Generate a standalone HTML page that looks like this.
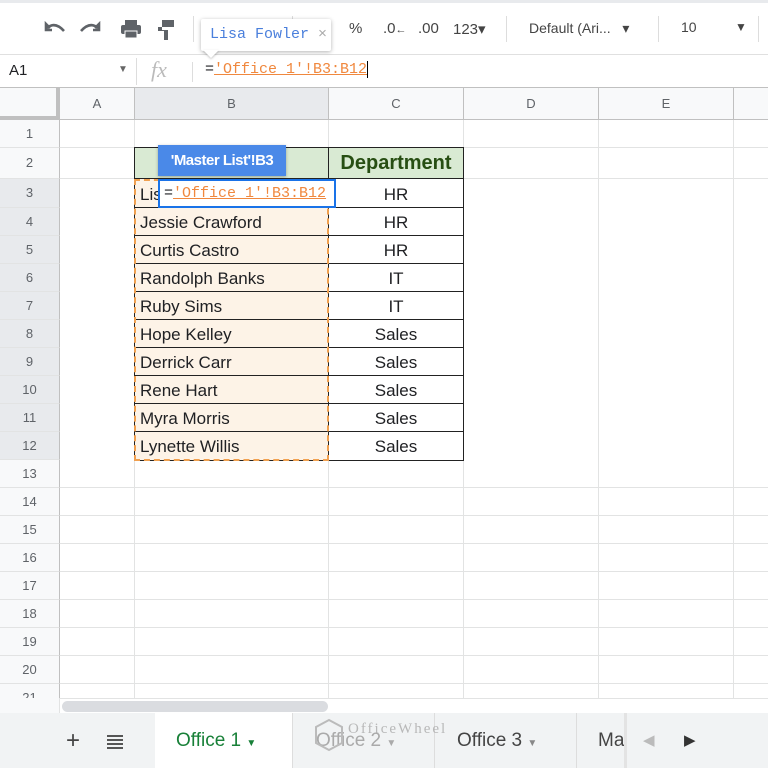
<!DOCTYPE html><html><head><style>
*{margin:0;padding:0;box-sizing:border-box}
body{width:768px;height:768px;overflow:hidden;background:#fff;font-family:"Liberation Sans",Arial,sans-serif;position:relative}
.a{position:absolute}
.rh{position:absolute;left:0;width:60px;text-align:center;font-size:13px;color:#5f6368;background:#f8f9fa;border-bottom:1px solid #e2e3e3;border-right:1px solid #c0c0c0}
.hl{position:absolute;left:60px;width:708px;height:1px;background:#e2e3e3}
.vl{position:absolute;top:120px;width:1px;height:578px;background:#e2e3e3}
.ch{position:absolute;top:88px;height:32px;text-align:center;line-height:31px;font-size:13px;color:#5f6368;background:#f8f9fa;border-right:1px solid #c0c0c0;border-bottom:1px solid #c0c0c0}
.c{position:absolute;font-size:17px;color:#202124;line-height:30px;height:28px}
.tb{position:absolute;top:16px;font-size:15px;color:#444}
</style></head><body>
<!-- toolbar -->
<div class="a" style="left:0;top:0;width:768px;height:55px;background:#fff;border-top:3px solid #e8eaed;border-bottom:1px solid #e0e0e0"></div>
<svg class="a" style="left:44px;top:18px" width="130" height="24" viewBox="0 0 130 24">
<path d="M6 10 L2 6 L2 12 L8 12 M3 10 Q11 3 20 13" stroke="#5f6368" stroke-width="2.6" fill="none"/>
<path d="M66 10 L70 6 L70 12 L64 12 M69 10 Q61 3 52 13" stroke="#5f6368" stroke-width="2.6" fill="none" transform="translate(-15 0)"/>
<rect x="81" y="2" width="12" height="5" fill="#5f6368"/><rect x="77" y="7" width="20" height="9" rx="2" fill="#5f6368"/><rect x="81" y="13" width="12" height="7" fill="#5f6368" stroke="#fff" stroke-width="1"/>
<rect x="118" y="2" width="13" height="7" fill="#5f6368"/><rect x="114" y="9" width="4" height="3" fill="#5f6368"/><rect x="114" y="12" width="6" height="1" fill="#5f6368"/><rect x="120" y="12" width="4" height="10" fill="#5f6368"/>
</svg>
<div class="a" style="left:193px;top:16px;width:1px;height:26px;background:#ddd"></div>
<div class="a" style="left:292px;top:16px;width:1px;height:26px;background:#ddd"></div>
<div class="tb" style="left:349px;top:20px">%</div>
<div class="tb" style="left:383px;top:20px">.0<span style="font-size:11px">←</span></div>
<div class="tb" style="left:418px;top:20px">.00</div>
<div class="tb" style="left:453px;top:20px">123▾</div>
<div class="a" style="left:506px;top:16px;width:1px;height:26px;background:#ddd"></div>
<div class="tb" style="left:529px;top:20px;font-size:14px">Default (Ari...&nbsp;&nbsp;&nbsp;▾</div>
<div class="a" style="left:658px;top:16px;width:1px;height:26px;background:#ddd"></div>
<div class="tb" style="left:681px;top:19px;font-size:14px">10</div>
<div class="tb" style="left:735px;top:20px;font-size:12px">▼</div>
<div class="a" style="left:758px;top:16px;width:1px;height:26px;background:#ddd"></div>
<!-- name tooltip -->
<div class="a" style="left:201px;top:19px;width:130px;height:32px;background:#fff;box-shadow:0 1px 4px rgba(0,0,0,.3);border-radius:2px;font-family:'Liberation Mono',monospace;font-size:15px;color:#4a7fdc;line-height:32px;padding-left:9px">Lisa Fowler <span style="color:#aaa">×</span></div>
<div class="a" style="left:203px;top:50px;width:0;height:0;border-left:8px solid transparent;border-right:8px solid transparent;border-top:8px solid #fff;filter:drop-shadow(0 1px 1px rgba(0,0,0,.25))"></div>
<!-- formula bar -->
<div class="a" style="left:0;top:55px;width:768px;height:33px;border-bottom:1px solid #c0c0c0"></div>
<div class="a" style="left:9px;top:62px;font-size:15px;color:#202124">A1</div>
<div class="a" style="left:118px;top:64px;font-size:10px;color:#666">▼</div>
<div class="a" style="left:136px;top:58px;width:1px;height:27px;background:#ddd"></div>
<div class="a" style="left:151px;top:57px;font-family:'Liberation Serif',serif;font-style:italic;font-size:22px;color:#bbb">fx</div>
<div class="a" style="left:192px;top:62px;width:1px;height:20px;background:#ddd"></div>
<div class="a" style="left:205px;top:61px;font-family:'Liberation Mono',monospace;font-size:15px;color:#202124">=<span style="color:#f0883e;text-decoration:underline">'Office 1'!B3:B12</span><span style="border-left:1px solid #000"></span></div>
<!-- headers -->
<div class="a" style="left:0;top:88px;width:60px;height:32px;background:#f8f9fa;border-right:4px solid #c0c0c0;border-bottom:4px solid #c0c0c0"></div>
<div class="ch" style="left:60px;width:75px">A</div>
<div class="ch" style="left:135px;width:194px;background:#e8eaed">B</div>
<div class="ch" style="left:329px;width:135px">C</div>
<div class="ch" style="left:464px;width:135px">D</div>
<div class="ch" style="left:599px;width:135px">E</div>
<div class="ch" style="left:734px;width:40px"></div>
<!-- grid -->
<div class="vl" style="left:134px"></div><div class="vl" style="left:328px"></div><div class="vl" style="left:463px"></div><div class="vl" style="left:598px"></div><div class="vl" style="left:733px"></div>
<div class="rh" style="top:120px;height:28px;line-height:27px">1</div>
<div class="rh" style="top:148px;height:31px;line-height:30px">2</div>
<div class="rh" style="top:179px;height:29px;line-height:28px;background:#e8eaed">3</div>
<div class="rh" style="top:208px;height:28px;line-height:27px;background:#e8eaed">4</div>
<div class="rh" style="top:236px;height:28px;line-height:27px;background:#e8eaed">5</div>
<div class="rh" style="top:264px;height:28px;line-height:27px;background:#e8eaed">6</div>
<div class="rh" style="top:292px;height:28px;line-height:27px;background:#e8eaed">7</div>
<div class="rh" style="top:320px;height:28px;line-height:27px;background:#e8eaed">8</div>
<div class="rh" style="top:348px;height:28px;line-height:27px;background:#e8eaed">9</div>
<div class="rh" style="top:376px;height:28px;line-height:27px;background:#e8eaed">10</div>
<div class="rh" style="top:404px;height:28px;line-height:27px;background:#e8eaed">11</div>
<div class="rh" style="top:432px;height:28px;line-height:27px;background:#e8eaed">12</div>
<div class="rh" style="top:460px;height:28px;line-height:27px">13</div>
<div class="rh" style="top:488px;height:28px;line-height:27px">14</div>
<div class="rh" style="top:516px;height:28px;line-height:27px">15</div>
<div class="rh" style="top:544px;height:28px;line-height:27px">16</div>
<div class="rh" style="top:572px;height:28px;line-height:27px">17</div>
<div class="rh" style="top:600px;height:28px;line-height:27px">18</div>
<div class="rh" style="top:628px;height:28px;line-height:27px">19</div>
<div class="rh" style="top:656px;height:28px;line-height:27px">20</div>
<div class="rh" style="top:684px;height:28px;line-height:27px">21</div>
<div class="hl" style="top:147px"></div><div class="hl" style="top:178px"></div>
<div class="hl" style="top:487px"></div><div class="hl" style="top:515px"></div><div class="hl" style="top:543px"></div><div class="hl" style="top:571px"></div><div class="hl" style="top:599px"></div><div class="hl" style="top:627px"></div><div class="hl" style="top:655px"></div><div class="hl" style="top:683px"></div>
<!-- table -->
<div class="a" style="left:134px;top:147px;width:330px;height:314px;border:1px solid #222;background:#fff"></div>
<div class="a" style="left:135px;top:148px;width:328px;height:31px;background:#d9ead3;border-bottom:1px solid #222"></div>
<div class="a" style="left:328px;top:148px;width:1px;height:312px;background:#222"></div>
<div class="a" style="left:329px;top:152px;width:134px;text-align:center;font-size:20px;font-weight:bold;color:#274e13">Department</div>
<div class="a" style="left:135px;top:179px;width:193px;height:281px;background:#fdf3e7"></div>
<div id="rows"></div>
<div class="a" style="left:134px;top:179px;width:195px;height:282px;border:2px dashed #f0a050"></div>
<!-- edit box -->
<div class="a" style="left:158px;top:179px;width:178px;height:29px;border:2px solid #1a73e8;background:#fff;font-family:'Liberation Mono',monospace;font-size:15px;line-height:25px;padding-left:4px;color:#202124">=<span style="color:#f0883e;text-decoration:underline">'Office 1'!B3:B12</span></div>
<div class="a" style="left:158px;top:145px;width:128px;height:31px;background:#4a89e8;color:#fff;font-size:15px;font-weight:bold;line-height:31px;text-align:center;box-shadow:0 1px 3px rgba(0,0,0,.3);letter-spacing:-.5px">'Master List'!B3</div>
<!-- scrollbar -->
<div class="a" style="left:0;top:698px;width:768px;height:15px;background:#fff;border-top:1px solid #e2e3e3"></div>
<div class="a" style="left:0;top:698px;width:60px;height:15px;background:#f8f9fa;border-right:1px solid #e2e3e3"></div>
<div class="a" style="left:62px;top:701px;width:266px;height:11px;background:#dadce0;border-radius:6px"></div>
<!-- tabs -->
<div class="a" style="left:0;top:713px;width:768px;height:55px;background:#f1f3f4"></div>
<div class="a" style="left:66px;top:727px;font-size:24px;color:#444">+</div>
<div class="a" style="left:107px;top:735px;width:16px;height:14px;background:repeating-linear-gradient(#555 0 2px,transparent 2px 4px)"></div>
<div class="a" style="left:155px;top:713px;width:138px;height:55px;background:#fff;border-right:1px solid #ddd"></div>
<div class="a" style="left:176px;top:730px;font-size:19px;color:#188038">Office 1 <span style="font-size:10px">▼</span></div>
<div class="a" style="left:316px;top:730px;font-size:19px;color:#aaa">Office 2 <span style="font-size:10px">▼</span></div>
<div class="a" style="left:434px;top:713px;width:1px;height:55px;background:#ddd"></div>
<div class="a" style="left:457px;top:730px;font-size:19px;color:#444">Office 3 <span style="font-size:10px;color:#888">▼</span></div>
<div class="a" style="left:576px;top:713px;width:1px;height:55px;background:#ddd"></div>
<div class="a" style="left:598px;top:730px;font-size:19px;color:#444">Ma</div>
<div class="a" style="left:624px;top:713px;width:144px;height:55px;background:#f1f3f4;border-left:3px solid #e3e3e3"></div>
<div class="a" style="left:643px;top:731px;font-size:15px;color:#bbb">◀</div>
<div class="a" style="left:684px;top:731px;font-size:15px;color:#333">▶</div>
<div class="a" style="left:348px;top:721px;font-family:'Liberation Serif',serif;font-size:15px;letter-spacing:2px;color:#aaa;opacity:.8">OfficeWheel</div>
<svg class="a" style="left:314px;top:718px" width="30" height="34"><path d="M15 2 L28 9 L28 25 L15 32 L2 25 L2 9 Z" fill="none" stroke="#bbb" stroke-width="2"/></svg>
<script>
var n=["Lisa Fowler","Jessie Crawford","Curtis Castro","Randolph Banks","Ruby Sims","Hope Kelley","Derrick Carr","Rene Hart","Myra Morris","Lynette Willis"],d=["HR","HR","HR","IT","IT","Sales","Sales","Sales","Sales","Sales"],h="";
for(var i=0;i<10;i++){var t=180+i*28;h+='<div class="c" style="left:140px;top:'+t+'px">'+n[i]+'</div><div class="c" style="left:329px;width:134px;text-align:center;top:'+t+'px">'+d[i]+'</div>';if(i<9)h+='<div class="a" style="left:135px;top:'+(207+i*28)+'px;width:328px;height:1px;background:#222"></div>';}
document.getElementById("rows").outerHTML=h;
</script>
</body></html>
